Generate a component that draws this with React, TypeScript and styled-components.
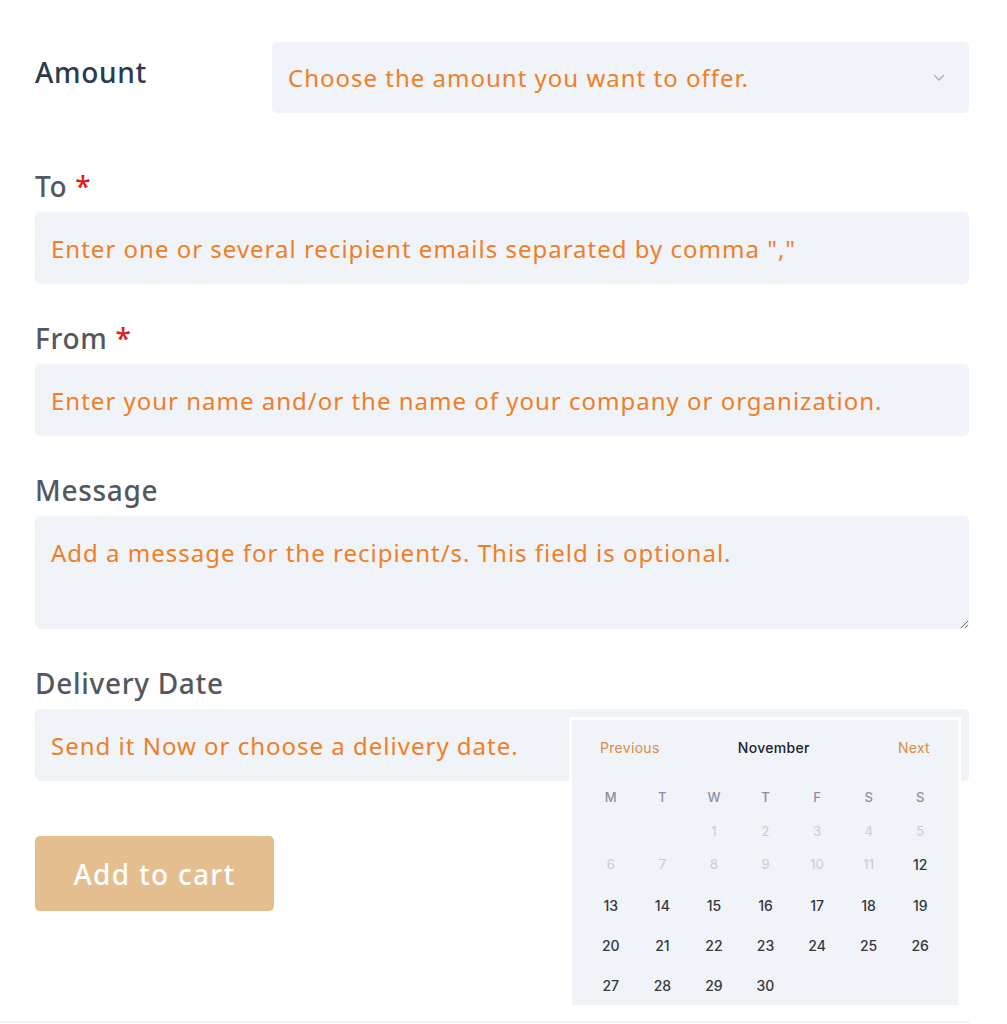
import React from "react";
import styled, { createGlobalStyle } from "styled-components";

const GlobalStyle = createGlobalStyle`
  body {
    margin: 0;
    background: #ffffff;
    font-family: "Noto Sans", "Open Sans", sans-serif;
  }
`;

const FONT = `"Noto Sans", "Open Sans", sans-serif`;
const CAL_FONT = `Inter, "Noto Sans", sans-serif`;

type Day = { n: number | null; off?: boolean };

const weekdays = ["M", "T", "W", "T", "F", "S", "S"];

const weeks: Day[][] = [
  [{ n: null }, { n: null }, { n: 1, off: true }, { n: 2, off: true }, { n: 3, off: true }, { n: 4, off: true }, { n: 5, off: true }],
  [{ n: 6, off: true }, { n: 7, off: true }, { n: 8, off: true }, { n: 9, off: true }, { n: 10, off: true }, { n: 11, off: true }, { n: 12 }],
  [{ n: 13 }, { n: 14 }, { n: 15 }, { n: 16 }, { n: 17 }, { n: 18 }, { n: 19 }],
  [{ n: 20 }, { n: 21 }, { n: 22 }, { n: 23 }, { n: 24 }, { n: 25 }, { n: 26 }],
  [{ n: 27 }, { n: 28 }, { n: 29 }, { n: 30 }, { n: null }, { n: null }, { n: null }],
];

// week rows: height and top padding, so the numbers land where the picker draws them
const rowHeights = [33, 34, 44, 40, 40];
const rowPads = [0, 0, 4, 0, 0];

export default function App() {
  return (
    <>
      <GlobalStyle />
      <Page>
        <AmountRow>
          <Label dark>Amount</Label>
          <Select>
            <span>Choose the amount you want to offer.</span>
            <svg width="12" height="8" viewBox="0 0 12 8" fill="none">
              <polyline
                points="1.5,1.5 6,6 10.5,1.5"
                stroke="#a9afb8"
                strokeWidth="1.4"
                strokeLinecap="round"
                strokeLinejoin="round"
              />
            </svg>
          </Select>
        </AmountRow>

        <Field>
          <Label>
            To <Required>*</Required>
          </Label>
          <Input placeholder={'Enter one or several recipient emails separated by comma ","'} />
        </Field>

        <Field>
          <Label>
            From <Required>*</Required>
          </Label>
          <Input placeholder="Enter your name and/or the name of your company or organization." />
        </Field>

        <Field>
          <Label>Message</Label>
          <TextArea placeholder="Add a message for the recipient/s. This field is optional." />
        </Field>

        <DateField>
          <Label>Delivery Date</Label>
          <Input placeholder="Send it Now or choose a delivery date." />
          <Calendar>
            <CalHeader>
              <NavLink>Previous</NavLink>
              <Month>November</Month>
              <NavLink>Next</NavLink>
            </CalHeader>
            <DayGrid>
              {weekdays.map((w, i) => (
                <WeekDay key={"w" + i}>{w}</WeekDay>
              ))}
              {weeks.map((week, wi) =>
                week.map((d, di) => (
                  <DayCell
                    key={wi + "-" + di}
                    off={d.off}
                    h={rowHeights[wi]}
                    pad={rowPads[wi]}
                  >
                    {d.n ?? ""}
                  </DayCell>
                ))
              )}
            </DayGrid>
          </Calendar>
        </DateField>

        <CartButton>Add to cart</CartButton>
      </Page>
    </>
  );
}

const Page = styled.div`
  width: 934px;
  padding: 42px 0 110px 35px;
  border-bottom: 2px solid #edf1f6;
  display: flex;
  flex-direction: column;
  font-family: ${FONT};
`;

const AmountRow = styled.div`
  display: grid;
  grid-template-columns: 237px 1fr;
  align-items: start;
  margin-bottom: 53px;
`;

const Label = styled.label<{ dark?: boolean }>`
  display: block;
  font-size: 28px;
  line-height: 40px;
  font-weight: 500;
  letter-spacing: 0.7px;
  color: ${(p) => (p.dark ? "#2c3a4f" : "#54585e")};
  margin-top: ${(p) => (p.dark ? "10px" : "0")};
  margin-bottom: 6px;
`;

const Required = styled.span`
  color: #e01b1b;
`;

const Select = styled.div`
  height: 71px;
  display: flex;
  align-items: center;
  justify-content: space-between;
  padding: 0 24px 0 16px;
  background: #f0f3f7;
  border-radius: 5px;
  color: #ef7f27;
  font-size: 24px;
  letter-spacing: 1px;
`;

const Field = styled.div`
  display: flex;
  flex-direction: column;
  margin-bottom: 34px;
`;

const DateField = styled(Field)`
  position: relative;
  margin-bottom: 55px;
`;

const fieldBase = `
  width: 100%;
  box-sizing: border-box;
  border: none;
  outline: none;
  background: #f0f3f7;
  border-radius: 5px;
  padding: 0 16px;
  font-family: ${FONT};
  font-size: 24px;
  letter-spacing: 1px;
  color: #ef7f27;
  &::placeholder {
    color: #ef7f27;
    opacity: 1;
  }
`;

const Input = styled.input`
  ${fieldBase}
  height: 72px;
`;

const TextArea = styled.textarea`
  ${fieldBase}
  height: 113px;
  padding: 20px 16px;
  line-height: 34px;
  resize: vertical;
  display: block;
`;

const Calendar = styled.div`
  position: absolute;
  left: 534px;
  top: 54px;
  width: 386px;
  border: 3px solid #ffffff;
  border-bottom: none;
  background: #f0f3f7;
  font-family: ${CAL_FONT};
`;

const CalHeader = styled.div`
  height: 60px;
  box-sizing: border-box;
  padding: 18px 28px 0 28px;
  display: flex;
  justify-content: space-between;
  align-items: flex-start;
  line-height: 20px;
  font-size: 14px;
  letter-spacing: 0.3px;
`;

const NavLink = styled.span`
  color: #dc8a47;
`;

const Month = styled.span`
  color: #1f2227;
  font-weight: 500;
  margin-right: 10px;
`;

const DayGrid = styled.div`
  display: grid;
  grid-template-columns: repeat(7, 1fr);
  padding: 0 12px 0 13px;
`;

const WeekDay = styled.div`
  height: 34px;
  display: flex;
  align-items: center;
  justify-content: center;
  font-size: 13px;
  font-weight: 500;
  color: #8a8fa6;
`;

const DayCell = styled.div<{ off?: boolean; h: number; pad: number }>`
  height: ${(p) => p.h}px;
  box-sizing: border-box;
  padding-top: ${(p) => p.pad}px;
  display: flex;
  align-items: center;
  justify-content: center;
  font-size: ${(p) => (p.off ? "13px" : "14px")};
  font-weight: ${(p) => (p.off ? 400 : 500)};
  color: ${(p) => (p.off ? "#c9cdd4" : "#34373c")};
`;

const CartButton = styled.button`
  width: 239px;
  height: 75px;
  border: none;
  border-radius: 5px;
  background: #e4be8f;
  color: #ffffff;
  font-family: ${FONT};
  font-size: 28px;
  font-weight: 500;
  letter-spacing: 1.3px;
  cursor: pointer;
`;
